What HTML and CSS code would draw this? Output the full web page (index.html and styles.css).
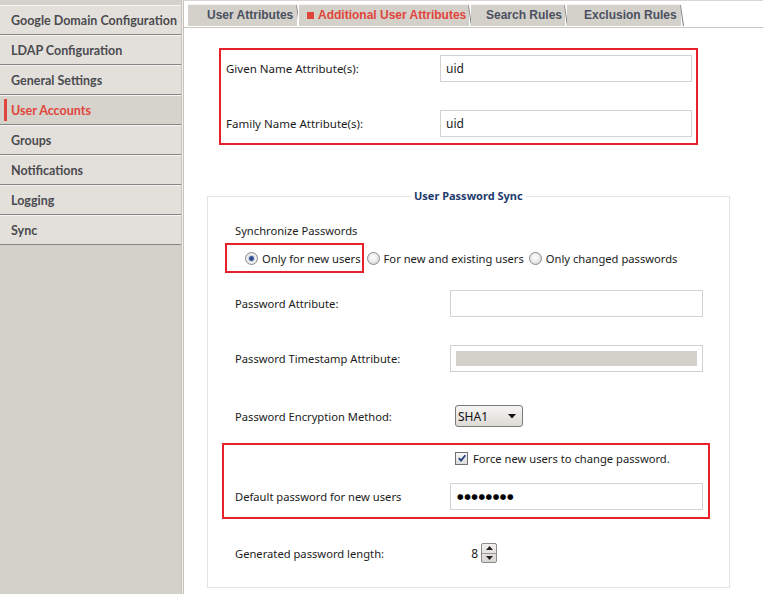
FILE: index.html
```html
<!DOCTYPE html>
<html>
<head>
<meta charset="utf-8">
<link rel="stylesheet" href="styles.css">
</head>
<body>
<div class="app">
  <nav class="sidebar">
    <div class="nav-item">Google Domain Configuration</div>
    <div class="nav-item">LDAP Configuration</div>
    <div class="nav-item">General Settings</div>
    <div class="nav-item active">User Accounts</div>
    <div class="nav-item">Groups</div>
    <div class="nav-item">Notifications</div>
    <div class="nav-item">Logging</div>
    <div class="nav-item">Sync</div>
  </nav>
  <div class="divider"></div>
  <main class="main">
    <div class="tabbar">
      <div class="tab tab-1">User Attributes</div>
      <div class="tab tab-2 active"><span class="tab-mark"></span>Additional User Attributes</div>
      <div class="tab tab-3">Search Rules</div>
      <div class="tab tab-4">Exclusion Rules</div>
    </div>

    <div class="highlight name-box">
      <div class="row">
        <span class="lbl name-lbl">Given Name Attribute(s):</span>
        <div class="input name-input">uid</div>
      </div>
      <div class="row second">
        <span class="lbl name-lbl">Family Name Attribute(s):</span>
        <div class="input name-input">uid</div>
      </div>
    </div>

    <fieldset class="sync">
      <legend>User Password Sync</legend>
      <div class="sync-title">Synchronize Passwords</div>
      <div class="radio-row">
        <span class="highlight radio-hl">
          <span class="radio checked"></span><span class="radio-text">Only for new users</span>
        </span>
        <span class="radio-opt"><span class="radio"></span><span class="radio-text">For new and existing users</span></span>
        <span class="radio-opt"><span class="radio"></span><span class="radio-text">Only changed passwords</span></span>
      </div>

      <div class="frow r-attr">
        <span class="lbl">Password Attribute:</span>
        <div class="input wide"></div>
      </div>
      <div class="frow r-ts">
        <span class="lbl">Password Timestamp Attribute:</span>
        <div class="input wide disabled"><div class="disabled-fill"></div></div>
      </div>
      <div class="frow r-enc">
        <span class="lbl">Password Encryption Method:</span>
        <div class="select">
          <span>SHA1</span>
          <svg class="sel-arrow" width="8" height="5" viewBox="0 0 8 5"><path d="M0 0H8L4 4.5Z" fill="#111"/></svg>
        </div>
      </div>

      <div class="highlight pw-box">
        <div class="check-row">
          <span class="checkbox"><svg width="10" height="10" viewBox="0 0 10 10"><path d="M1.8 5.2 L4 7.6 L8.4 2.2" fill="none" stroke="#23407e" stroke-width="1.8"/></svg></span>
          <span class="check-text">Force new users to change password.</span>
        </div>
        <div class="frow pw-row">
          <span class="lbl">Default password for new users</span>
          <div class="input wide dots">●●●●●●●●</div>
        </div>
      </div>

      <div class="frow r-len">
        <span class="lbl">Generated password length:</span>
        <span class="spin-value">8</span>
        <div class="spinner">
          <div class="spin-half"><svg width="7" height="4" viewBox="0 0 7 4"><path d="M0 4H7L3.5 0Z" fill="#222"/></svg></div>
          <div class="spin-half"><svg width="7" height="4" viewBox="0 0 7 4"><path d="M0 0H7L3.5 4Z" fill="#222"/></svg></div>
        </div>
      </div>
    </fieldset>
  </main>
</div>
</body>
</html>
```

FILE: styles.css
```css
html, body {
  margin: 0;
  padding: 0;
  background: #ffffff;
}

.app {
  display: flex;
  width: 763px;
  height: 594px;
  overflow: hidden;
  font-family: "Noto Sans", "Open Sans", sans-serif;
  font-size: 11.2px;
  color: #1b1b1b;
}

/* Sidebar */
.sidebar {
  width: 181px;
  flex: none;
  background: #d4d0ca;
  padding-top: 5px;
  box-sizing: border-box;
}

.nav-item {
  position: relative;
  height: 30px;
  box-sizing: border-box;
  border-top: 1px solid #f7f6f4;
  border-bottom: 1px solid #858585;
  background: #e3e0db;
  padding-left: 11px;
  display: flex;
  align-items: center;
  font-family: "Lato", "Noto Sans", sans-serif;
  font-weight: 700;
  font-size: 12.5px;
  color: #4b4b4f;
}

.nav-item.active {
  background: #d6d2cc;
  color: #e0453b;
}

.nav-item.active::before {
  content: "";
  position: absolute;
  left: 4px;
  top: 3px;
  bottom: 3px;
  width: 3px;
  background: #e0453b;
}

.divider {
  width: 3px;
  flex: none;
  box-sizing: border-box;
  border-left: 1px solid #c6c2bb;
  border-right: 1px solid #c6c2bb;
  background: #f2f0ed;
}

/* Main */
.main {
  flex: 1;
  min-width: 0;
}

.tabbar {
  height: 28px;
  box-sizing: border-box;
  border-top: 1px solid #d9d6d1;
  border-bottom: 1px solid #cbc7c1;
  padding: 3px 0 0 4px;
  display: flex;
  align-items: flex-start;
}

.tab {
  position: relative;
  height: 22px;
  box-sizing: border-box;
  background: #d4d0ca;
  display: flex;
  align-items: center;
  padding-bottom: 1px;
  font-family: "Liberation Sans", Arial, sans-serif;
  font-weight: 700;
  font-size: 12px;
  color: #4a5060;
  border-top: 1px solid #f4f3f1;
}

.tab::after {
  content: "";
  position: absolute;
  right: 0;
  top: 0;
  height: 21px;
  width: 1px;
  background: linear-gradient(#9a9a9a, #6e6e6e);
  transform: skewX(8deg);
  transform-origin: top;
}

.tab-1 { width: 109px; padding-left: 19px; }
.tab-2 { width: 171px; padding-left: 8px; margin-left: 1px; border-left: 1px solid #ffffff; }
.tab-3 { width: 94px; padding-left: 15px; margin-left: 2px; }
.tab-4 { width: 114px; padding-left: 17px; margin-left: 2px; }

.tab.active {
  color: #e0453b;
}

.tab-mark {
  width: 7px;
  height: 7px;
  background: #e0453b;
  margin-right: 4px;
  flex: none;
}

/* Highlight boxes */
.highlight {
  border: 2px solid #e8202a;
  box-sizing: border-box;
}

.name-box {
  width: 479px;
  margin: 20px 0 0 35px;
  padding: 5px 4px 6px 5px;
}

.row {
  display: flex;
  align-items: center;
}

.row.second {
  margin-top: 28px;
}

.lbl {
  flex: none;
  width: 215px;
  white-space: nowrap;
}

.name-lbl {
  width: 214px;
  font-size: 11.5px;
}

.input {
  height: 27px;
  box-sizing: border-box;
  border: 1px solid #d3d3d3;
  background: #fff;
  display: flex;
  align-items: center;
  padding-left: 5px;
  font-size: 12px;
}

.name-input {
  width: 252px;
}

.wide {
  width: 253px;
}

.input.disabled {
  padding: 5px;
  border-color: #cfcfcf;
}

.disabled-fill {
  flex: 1;
  height: 15px;
  background: #d4d0ca;
}

/* Fieldset */
.sync {
  width: 523px;
  box-sizing: border-box;
  margin: 43px 0 0 23px;
  border: 1px solid #e4e4e4;
  padding: 0 0 24px 27px;
  min-width: 0;
}

.sync legend {
  margin: 0 0 0 176px;
  padding: 0 3px;
  line-height: 16px;
  font-weight: 700;
  font-size: 11px;
  color: #1e3a6c;
}

.sync-title {
  margin-top: 16px;
  height: 20px;
  display: flex;
  align-items: center;
}

.radio-row {
  margin-top: 3px;
  height: 30px;
  display: flex;
  align-items: center;
  margin-left: -10px;
}

.radio-hl {
  height: 30px;
  display: flex;
  align-items: center;
  padding-left: 18px;
  padding-right: 1px;
}

.radio-opt {
  display: flex;
  align-items: center;
  margin-left: 3px;
}

.radio-opt + .radio-opt {
  margin-left: 5px;
}

.radio {
  width: 13px;
  height: 13px;
  box-sizing: border-box;
  border-radius: 50%;
  border: 1px solid #8c8c8c;
  background: radial-gradient(circle at 45% 40%, #ffffff 0, #eeeeee 40%, #cfcfcf 100%);
  flex: none;
}

.radio.checked {
  background: radial-gradient(circle at 50% 50%, #26447f 0, #3a5a95 2px, #c9d3e3 3px, #f2f2f2 4px, #d4d4d4 100%);
}

.radio-text {
  margin-left: 4px;
}

.frow {
  display: flex;
  align-items: center;
}

.r-attr { margin-top: 17px; }
.r-ts { margin-top: 28px; }
.r-enc { margin-top: 33px; height: 22px; }

.select {
  margin-left: 5px;
  width: 68px;
  height: 22px;
  box-sizing: border-box;
  border: 1px solid #7a7a7a;
  border-radius: 3px;
  background: linear-gradient(#f6f5f3, #dddad5);
  display: flex;
  align-items: center;
  justify-content: space-between;
  padding: 0 6px 0 2px;
  font-size: 12px;
  color: #111;
}

.pw-box {
  width: 488px;
  margin: 16px 0 0 -13px;
  padding: 5px 5px 7px 11px;
}

.check-row {
  height: 16px;
  display: flex;
  align-items: center;
  padding-left: 220px;
}

.checkbox {
  width: 13px;
  height: 13px;
  box-sizing: border-box;
  border: 1px solid #6f6f6f;
  background: linear-gradient(#f7f7f7, #dcdcdc);
  display: flex;
  align-items: center;
  justify-content: center;
  flex: none;
}

.check-text {
  margin-left: 5px;
}

.pw-row {
  margin-top: 17px;
}

.dots {
  font-family: "DejaVu Sans", sans-serif;
  font-size: 7.5px;
  letter-spacing: 0.6px;
  padding-left: 6px;
  color: #000;
}

.r-len {
  margin-top: 24px;
  height: 20px;
}

.spin-value {
  width: 28px;
  text-align: right;
  font-size: 12px;
}

.spinner {
  margin-left: 3px;
  width: 16px;
  height: 20px;
  box-sizing: border-box;
  border: 1px solid #8a8a8a;
  border-radius: 2px;
  display: flex;
  flex-direction: column;
  background: linear-gradient(#f1f0ee, #d9d6d1);
}

.spin-half {
  flex: 1;
  display: flex;
  align-items: center;
  justify-content: center;
}

.spin-half + .spin-half {
  border-top: 1px solid #9a9a9a;
}
```
